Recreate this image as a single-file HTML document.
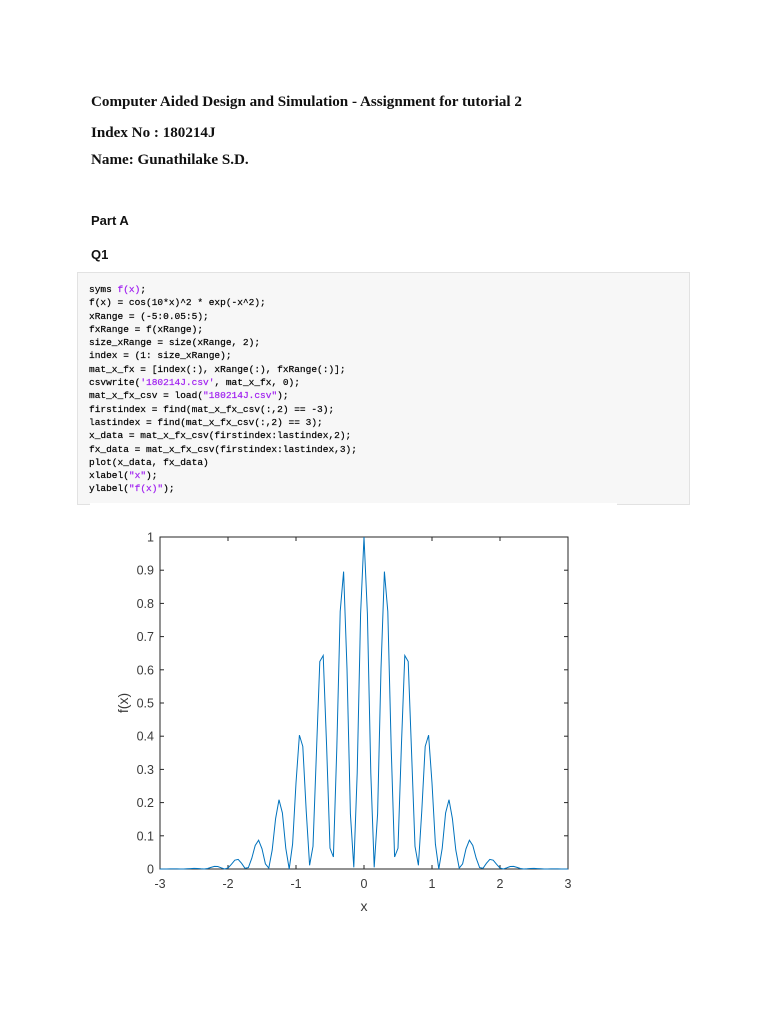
<!DOCTYPE html>
<html><head><meta charset="utf-8"><style>
body{margin:0;width:768px;height:1024px;background:#fff;position:relative;overflow:hidden}
.t{position:absolute;left:91px;font-family:"Liberation Serif",serif;font-weight:bold;font-size:15.1px;color:#111;white-space:nowrap;line-height:1}
.s{position:absolute;left:91px;font-family:"Liberation Sans",sans-serif;font-weight:bold;font-size:13px;color:#111;line-height:1}
.code{position:absolute;left:77px;top:272px;width:613px;height:233px;background:#f7f7f7;border:1px solid #e2e2e2;box-sizing:border-box}
pre{position:absolute;left:89px;top:283px;margin:0;font-family:"Liberation Mono",monospace;font-size:9.5px;line-height:13.3px;color:#000;-webkit-text-stroke:0.2px #000}
.p{color:#a020f0;-webkit-text-stroke:0.2px #a020f0}
</style></head><body>
<div class="t" style="top:95px">Computer Aided Design and Simulation - Assignment for tutorial 2</div>
<div class="t" style="top:126px">Index No : 180214J</div>
<div class="t" style="top:153px">Name: Gunathilake S.D.</div>
<div class="s" style="top:214px">Part A</div>
<div class="s" style="top:248px">Q1</div>
<div class="code"></div>
<div style="position:absolute;left:90px;top:503px;width:527px;height:3px;background:#fff"></div>
<pre>syms <span class="p">f(x)</span>;
f(x) = cos(10*x)^2 * exp(-x^2);
xRange = (-5:0.05:5);
fxRange = f(xRange);
size_xRange = size(xRange, 2);
index = (1: size_xRange);
mat_x_fx = [index(:), xRange(:), fxRange(:)];
csvwrite(<span class="p">'180214J.csv'</span>, mat_x_fx, 0);
mat_x_fx_csv = load(<span class="p">"180214J.csv"</span>);
firstindex = find(mat_x_fx_csv(:,2) == -3);
lastindex = find(mat_x_fx_csv(:,2) == 3);
x_data = mat_x_fx_csv(firstindex:lastindex,2);
fx_data = mat_x_fx_csv(firstindex:lastindex,3);
plot(x_data, fx_data)
xlabel(<span class="p">"x"</span>);
ylabel(<span class="p">"f(x)"</span>);</pre>
<svg width="768" height="1024" style="position:absolute;left:0;top:0" font-family="Liberation Sans, sans-serif" font-size="12.5" fill="#3a3a3a">
<g id="ax" stroke="#262626" stroke-width="1" fill="none">
<rect x="160" y="537" width="408" height="332"/>
</g>
<polyline id="cv" fill="none" stroke="#0072bd" stroke-width="1" points=""/>
<g id="lb"></g>
<text x="364" y="911" text-anchor="middle" font-size="14">x</text>
<text transform="translate(128,703) rotate(-90)" text-anchor="middle" font-size="14">f(x)</text>
</svg>
<script>
var L=160,R=568,T=537,B=869,pts=[];
for(var i=-60;i<=60;i++){var x=i*0.05,y=Math.pow(Math.cos(10*x),2)*Math.exp(-x*x);pts.push((L+(x+3)/6*(R-L)).toFixed(1)+","+(B-y*(B-T)).toFixed(1));}
document.getElementById("cv").setAttribute("points",pts.join(" "));
var ax=document.getElementById("ax"),lb=document.getElementById("lb");
var g="",t="";
for(var k=0;k<=10;k++){var y=B-k/10*(B-T);g+='<line x1="'+L+'" y1="'+y+'" x2="'+(L+4)+'" y2="'+y+'"/><line x1="'+R+'" y1="'+y+'" x2="'+(R-4)+'" y2="'+y+'"/>';
t+='<text x="'+(L-6)+'" y="'+(y+4.5)+'" text-anchor="end">'+(k==0?'0':k==10?'1':'0.'+k)+'</text>';}
for(var k=-3;k<=3;k++){var x=L+(k+3)/6*(R-L);g+='<line x1="'+x+'" y1="'+B+'" x2="'+x+'" y2="'+(B-4)+'"/><line x1="'+x+'" y1="'+T+'" x2="'+x+'" y2="'+(T+4)+'"/>';
t+='<text x="'+x+'" y="'+(B+19)+'" text-anchor="middle">'+k+'</text>';}
ax.innerHTML+=g;lb.innerHTML=t;
</script>
</body></html>
